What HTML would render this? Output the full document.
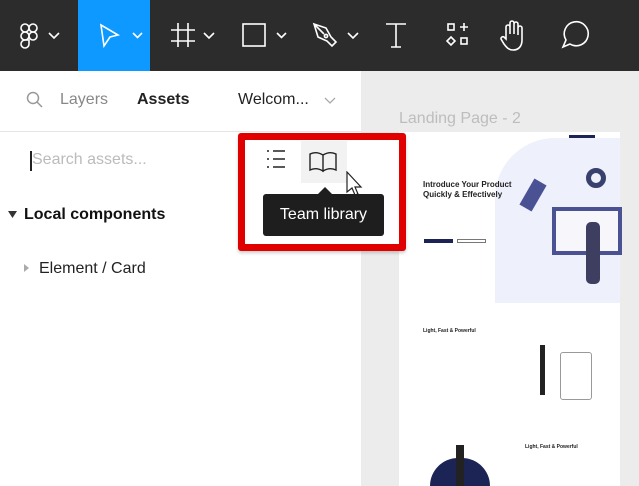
<!DOCTYPE html>
<html><head><style>
*{margin:0;padding:0;box-sizing:border-box}
body{width:639px;height:486px;overflow:hidden;background:#ececec;font-family:"Liberation Sans",sans-serif;position:relative}
.a{position:absolute}
</style></head><body>
<div class="a" style="left:0;top:0;width:639px;height:71px;background:#2c2c2c"></div>
<div class="a" style="left:78px;top:0;width:72px;height:71px;background:#0d99ff"></div>
<svg class="a" style="left:0;top:0" width="639" height="71" fill="none" stroke="#fff" stroke-width="1.6">
<g>
<rect x="21" y="24" width="8" height="8" rx="4"/><rect x="29" y="24" width="8" height="8" rx="4"/>
<rect x="21" y="32" width="8" height="8" rx="4"/><circle cx="33" cy="36" r="4"/>
<path d="M21 44a4 4 0 0 1 4-4H29v4a4 4 0 0 1-8 0z"/>
</g>
<path d="M49 33l5 5 5-5"/>
<path d="M101 25l17 10-8 2-6 9z"/>
<path d="M133 33l4.5 4.5 4.5-4.5"/>
<path d="M178 23v24M188 23v24M171 30h24M171 41h24"/>
<path d="M204 33l5 5 5-5"/>
<rect x="243" y="24" width="22" height="22"/>
<path d="M277 33l4.5 4.5 4.5-4.5"/>
<path d="M314 24l12 4 5 9 5 5-4 4-5-5-9-4z M314 24l10 10"/><circle cx="326" cy="36" r="1.6"/>
<path d="M348 33l5 5 5-5"/>
<path d="M386 24h20M396 24v23M391 47h10"/>
<rect x="448" y="24" width="6" height="6"/><path d="M464 23v8M460 27h8"/><path d="M451 37l4 4-4 4-4-4z"/><rect x="461" y="38" width="6" height="6"/>
<path d="M506 39v-12a2 2 0 0 1 4 0v7v-11a2 2 0 0 1 4 0v11v-10a2 2 0 0 1 4 0v11v-7a2 2 0 0 1 4 0v12c0 7-4 10-9 10-4 0-6-2-9-6l-3-5a2 2 0 0 1 3-2z"/>
<path d="M563 47l3-7a12 12 0 1 1 4 4z"/>
</svg>
<div class="a" style="left:0;top:71px;width:361px;height:415px;background:#fff"></div>
<div class="a" style="left:0;top:131px;width:361px;height:1px;background:#e5e5e5"></div>
<svg class="a" style="left:26px;top:91px" width="18" height="18" fill="none" stroke="#999" stroke-width="1.5"><circle cx="7" cy="7" r="5.5"/><path d="M11 11l5 5"/></svg>
<div class="a" style="left:60px;top:91px;font-size:16px;color:#888">Layers</div>
<div class="a" style="left:137px;top:91px;font-size:16px;color:#222;font-weight:bold">Assets</div>
<div class="a" style="left:238px;top:91px;font-size:16px;color:#222">Welcom...</div>
<svg class="a" style="left:324px;top:97px" width="12" height="8" fill="none" stroke="#aaa" stroke-width="1.3"><path d="M1 1l5 5 5-5"/></svg>
<div class="a" style="left:30px;top:151px;width:1.5px;height:20px;background:#222"></div>
<div class="a" style="left:32px;top:151px;font-size:16px;color:#bbb">Search assets...</div>
<svg class="a" style="left:8px;top:211px" width="10" height="8"><path d="M0 0h9l-4.5 7z" fill="#333"/></svg>
<div class="a" style="left:24px;top:206px;font-size:16px;color:#111;font-weight:bold">Local components</div>
<svg class="a" style="left:24px;top:264px" width="6" height="9"><path d="M0 0v8l5-4z" fill="#aaa"/></svg>
<div class="a" style="left:39px;top:260px;font-size:16px;color:#222">Element / Card</div>

<div class="a" style="left:399px;top:110px;font-size:16px;color:#bdbdbd">Landing Page - 2</div>
<div class="a" style="left:399px;top:132px;width:221px;height:354px;background:#fff"></div>
<div class="a" style="left:495px;top:138px;width:125px;height:165px;background:#eef0fb;border-radius:60px 0 0 0"></div>
<div class="a" style="left:423px;top:180px;font-size:8px;font-weight:bold;color:#222;line-height:10px">Introduce Your Product<br>Quickly &amp; Effectively</div>
<div class="a" style="left:424px;top:239px;width:29px;height:4px;background:#1c2456"></div>
<div class="a" style="left:457px;top:239px;width:29px;height:4px;border:1px solid #777"></div>
<div class="a" style="left:569px;top:135px;width:26px;height:3px;background:#1c2456"></div>
<div class="a" style="left:552px;top:207px;width:70px;height:48px;border:4px solid #4a5294;background:#f6f6fb"></div>
<div class="a" style="left:586px;top:222px;width:14px;height:62px;background:#3d3e60;border-radius:5px"></div>
<div class="a" style="left:526px;top:180px;width:14px;height:30px;background:#4a5294;transform:rotate(30deg)"></div>
<div class="a" style="left:586px;top:168px;width:20px;height:20px;border:5px solid #38406e;border-radius:50%"></div>
<div class="a" style="left:423px;top:328px;font-size:5px;font-weight:bold;color:#222">Light, Fast &amp; Powerful</div>
<div class="a" style="left:540px;top:345px;width:5px;height:50px;background:#222"></div>
<div class="a" style="left:560px;top:352px;width:32px;height:48px;border:1px solid #999;border-radius:3px"></div>
<div class="a" style="left:525px;top:444px;font-size:5px;font-weight:bold;color:#222">Light, Fast &amp; Powerful</div>
<div class="a" style="left:430px;top:458px;width:60px;height:28px;background:#1c2456;border-radius:30px 30px 0 0"></div>
<div class="a" style="left:456px;top:445px;width:8px;height:41px;background:#222"></div>

<div class="a" style="left:238px;top:133px;width:168px;height:118px;border:7px solid #e00000;border-radius:3px;background:#fff;box-shadow:0 2px 3px rgba(0,0,0,.2)"></div>
<div class="a" style="left:301px;top:141px;width:46px;height:42px;background:#f2f2f2"></div>
<svg class="a" style="left:264px;top:148px" width="24" height="24" stroke="#222" stroke-width="1.4" fill="none"><path d="M3 3h2M9 3h12M3 11h2M9 11h12M3 19h2M9 19h12"/></svg>
<svg class="a" style="left:308px;top:150px" width="30" height="24" stroke="#222" stroke-width="1.4" fill="none"><path d="M2 4c4-2 8-2 13 1v16c-5-3-9-3-13-1z M28 4c-4-2-8-2-13 1v16c5-3 9-3 13-1z"/></svg>
<svg class="a" style="left:345px;top:171px" width="22" height="28"><path d="M2 1v20l5-4 3 7 3-1-3-7h6z" fill="#fff" stroke="#222" stroke-width="1.2"/></svg>
<div class="a" style="left:263px;top:194px;width:121px;height:42px;background:#1e1e1e;border-radius:3px;color:#fff;font-size:16px;line-height:42px;text-align:center">Team library</div>
<div class="a" style="left:318px;top:187px;width:0;height:0;border:7px solid transparent;border-bottom-color:#1e1e1e;border-top:0"></div>
</body></html>
